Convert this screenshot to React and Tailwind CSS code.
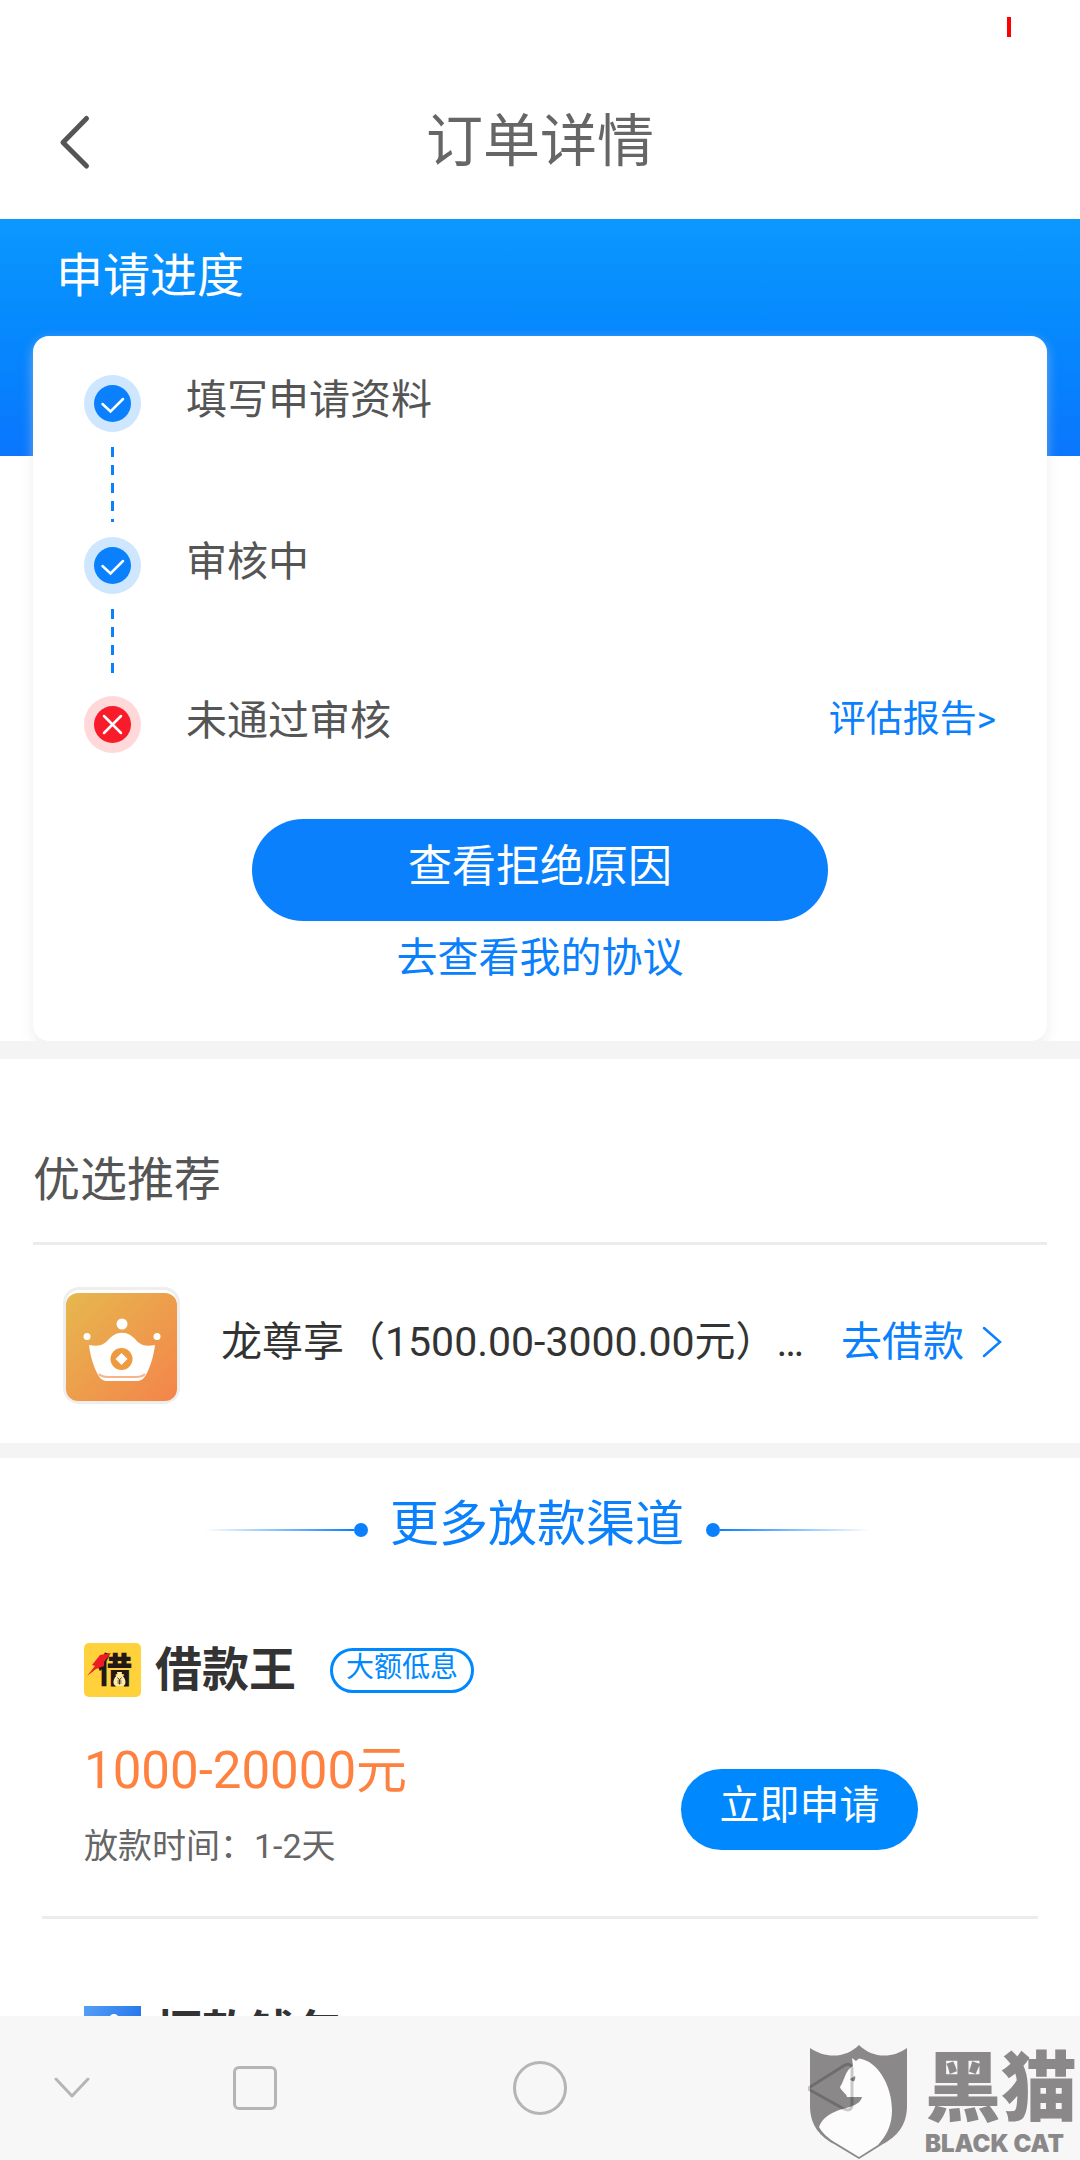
const steps = [
  { label: "填写申请资料", ok: true, line: "h-[75px]" },
  { label: "审核中", ok: true, line: "h-[72px]" },
  { label: "未通过审核", ok: false },
];

const loans = [
  {
    name: "借款王",
    tag: "大额低息",
    amount: "1000-20000元",
    time: "放款时间：1-2天",
    Logo: LogoJie,
  },
  {
    name: "恒款钱包",
    Logo: LogoWallet,
  },
];

function StepIcon({ ok }) {
  return (
    <svg viewBox="0 0 57 57" className="w-[57px] h-[57px]" fill="none">
      <circle cx="28.5" cy="28.5" r="28.5" fill={ok ? "#cfe6ff" : "#ffd9da"} />
      <circle cx="28.5" cy="28.5" r="18.5" fill={ok ? "#0b80fd" : "#f81c2b"} />
      <path
        d={ok ? "M18.5 29 L26.5 36.5 L39 24" : "M20 20 L37 37 M37 20 L20 37"}
        stroke="#fff"
        strokeWidth="2.5"
        strokeLinecap="round"
      />
    </svg>
  );
}

function DashedLine({ className }) {
  return (
    <svg className={"w-[3px] " + className}>
      <line x1="1.5" y1="0" x2="1.5" y2="100%" stroke="#0b80fd" strokeWidth="3" strokeDasharray="10 8" />
    </svg>
  );
}

function CrownIcon() {
  return (
    <svg viewBox="0 0 111 108" className="w-[111px] h-[108px] rounded-xl">
      <defs>
        <linearGradient id="crown" x1="0" y1="0" x2="1" y2="1">
          <stop offset="0" stopColor="#e6b84e" />
          <stop offset="1" stopColor="#f4844a" />
        </linearGradient>
      </defs>
      <rect width="111" height="108" fill="url(#crown)" />
      <g fill="#fff">
        <circle cx="56" cy="31" r="5.5" />
        <circle cx="21" cy="43.5" r="3.5" />
        <circle cx="91" cy="43.5" r="3.5" />
        <path d="M23 52 C34 54 38 52 44 45 C51 38 61 38 68 45 C74 52 78 54 89 52 C88 61 85 72 81 80 C78 86 75 88 71 88 L41 88 C37 88 34 86 31 80 C27 72 24 61 23 52 Z" />
      </g>
      <path d="M33 81 C36 84 39 84 42 84 L70 84 C73 84 76 84 79 81" fill="none" stroke="#f6b48a" strokeWidth="2" />
      <circle cx="55.5" cy="66" r="11" fill="#ee9a3f" />
      <path d="M55.5 60 L61.5 66 L55.5 72 L49.5 66 Z" fill="#fff" />
    </svg>
  );
}

function LogoJie() {
  return (
    <svg viewBox="0 0 57 54" className="w-[57px] h-[54px]">
      <rect width="57" height="54" rx="5" fill="#ffd23c" />
      <text
        x="13"
        y="40"
        className="text-[35px] font-black"
        fill="#231815"
        fontFamily="'Noto Sans CJK SC', sans-serif"
      >
        借
      </text>
      <path d="M16 12 L27 10 L20 19 L20 23 L12 26 L3 33 L11 23 L8 22 Z" fill="#ed1c24" />
      <path d="M33 29 L38 29 L37.5 32 C42 35 43 42 39 43 L32 43 C28 42 29 35 33.5 32 Z" fill="#ffe9a8" />
      <path d="M33.5 34.5 L35.5 37 L37.5 34.5 M35.5 37 V41.5 M33.5 38 H37.5 M33.5 40 H37.5" fill="none" stroke="#231815" strokeWidth="0.8" />
    </svg>
  );
}

function LogoWallet() {
  return (
    <svg viewBox="0 0 57 54" className="w-[57px] h-[54px]">
      <defs>
        <linearGradient id="wallet" x1="0" y1="0" x2="1" y2="0.4">
          <stop offset="0" stopColor="#549ff5" />
          <stop offset="1" stopColor="#2374ec" />
        </linearGradient>
      </defs>
      <rect width="57" height="54" fill="url(#wallet)" />
      <circle cx="30" cy="13" r="5" fill="#fff" />
      <rect x="14" y="20" width="30" height="22" rx="4" fill="#fff" />
    </svg>
  );
}

function LoanItem({ name, tag, amount, time, Logo }) {
  return (
    <li className="mx-[42px] px-[42px] pt-[87px] pb-[50px] border-b-3 border-[#ececec]">
      <div className="flex items-center h-[54px]">
        <Logo />
        <h3 className="ml-[14px] text-[47px] leading-[54px] font-bold text-[#333]">{name}</h3>
        {tag && (
          <span className="ml-[34px] flex items-center h-[45px] px-[13px] pb-1 border-3 border-[#0089ff] rounded-full text-[28px] leading-[32px] text-[#0089ff]">
            {tag}
          </span>
        )}
      </div>
      {amount && (
        <div className="mt-11 flex justify-between">
          <div>
            <p className="text-[51px] leading-[60px] text-[#ff8140]">{amount}</p>
            <p className="mt-[25px] text-[34px] leading-[40px] text-[#666]">{time}</p>
          </div>
          <button className="mt-7 mr-[78px] w-[237px] h-[81px] pb-2 rounded-full bg-[#0089ff] text-[40px] leading-[48px] text-white">
            立即申请
          </button>
        </div>
      )}
    </li>
  );
}

function BlackCat() {
  return (
    <div className="absolute right-0 bottom-0 flex items-end gap-[17px] text-[#8b8889] pointer-events-none">
      <svg viewBox="0 0 100 116" className="w-[100px] h-[116px]">
        <path
          d="M2 4 C18 15 38 14 51 1 C64 14 84 15 99 4 L99 62 C99 82 88 93 75 100 L51 115 L26 100 C13 93 2 82 2 62 Z"
          fill="#8b8889"
        />
        <path
          d="M44 14 L48 17 L51 14.5 C70 17 84 42 84 66 C84 82 78 92 70 101 L51 113 L28 99 C20 94 15 90 11 83 C16 70 30 66 42 63 C50 60 53 57 54 53 L39 53 C38 49 33 47 32 43 C36 38 37 26 45 22 Z"
          fill="#fcfcfc"
        />
        <path d="M42 35 L47 32 C48 36 46 38 44 37 Z" fill="#8b8889" />
        <path
          d="M2 43 L37 21 C41 19 44 21 44 25 V61 C44 66 40 67 36 65 L2 46 C0 45 0 44 2 43 Z"
          fill="none"
          stroke="#000"
          strokeOpacity="0.2"
          strokeWidth="3"
        />
      </svg>
      <div className="w-[155px]">
        <p className="text-[76px] leading-[78px] font-black whitespace-nowrap">黑猫</p>
        <p className="text-[24px] leading-[32px] font-black whitespace-nowrap font-[Inter,sans-serif]">
          BLACK CAT
        </p>
      </div>
    </div>
  );
}

export default function App() {
  return (
    <div className="flex flex-col h-screen overflow-hidden bg-white font-[Roboto,'Noto_Sans_CJK_SC',sans-serif]">
      <div className="flex justify-end items-start h-16 shrink-0 pt-[17px] pr-[69px]">
        <span className="w-1 h-5 bg-[#ff0000]" />
      </div>

      <header className="grid grid-cols-[1fr_auto_1fr] items-center h-[155px] shrink-0 px-[57px]">
        <button aria-label="返回" className="w-9 h-14">
          <svg viewBox="0 0 36 56" fill="none" className="w-9 h-14">
            <path d="M29.5 4.5 L6 28.5 L29.5 52" stroke="#555" strokeWidth="5" strokeLinecap="round" strokeLinejoin="round" />
          </svg>
        </button>
        <h1 className="text-[57px] leading-[66px] text-[#666]">订单详情</h1>
      </header>

      <main className="flex-1 min-h-0 overflow-hidden">
        <section>
          <div className="h-[237px] pt-8 px-[56px] bg-linear-to-b from-[#0b98fe] to-[#0a76fd]">
            <h2 className="text-[47px] leading-[50px] text-white">申请进度</h2>
          </div>

          <div className="relative -mt-[120px] mx-[33px] pt-[39px] pb-[54px] px-[51px] flex flex-col bg-white rounded-2xl shadow-[0_4px_12px_#dcdcdc80]">
            <ol>
              {steps.map((step) => (
                <li key={step.label} className="flex gap-[45px]">
                  <div className="flex flex-col items-center gap-[15px]">
                    <StepIcon ok={step.ok} />
                    {step.line && (
                      <div className="pb-[15px]">
                        <DashedLine className={step.line} />
                      </div>
                    )}
                  </div>
                  <p className="flex-1 text-[41px] leading-[50px] text-[#555]">{step.label}</p>
                  {!step.ok && (
                    <a href="#report" className="text-[37px] leading-[48px] text-[#0b80fd]">
                      评估报告&gt;
                    </a>
                  )}
                </li>
              ))}
            </ol>

            <button className="self-center mt-[66px] w-[576px] h-[102px] pb-[6px] rounded-full bg-[#0b80fd] text-[44px] text-white">
              查看拒绝原因
            </button>
            <a href="#agreement" className="self-center mt-2 text-[41px] leading-[58px] text-[#0b80fd]">
              去查看我的协议
            </a>
          </div>
        </section>

        <section className="relative border-t-18 border-[#f4f4f4] bg-white">
          <div className="mx-[33px]">
            <h2 className="pt-[93px] pb-[34px] text-[47px] leading-[56px] text-[#555] border-b-3 border-[#ececec]">
              优选推荐
            </h2>
            <div className="flex items-center pt-[42px] pb-[39px] pl-[30px] pr-[45px]">
              <div className="p-[3px] pt-[6px] rounded-2xl bg-[#fefefe] ring-3 ring-[#eee] ring-inset">
                <CrownIcon />
              </div>
              <p className="flex-1 min-w-0 ml-[41px] pb-2 text-[41px] leading-[48px] text-[#333] whitespace-nowrap">
                龙尊享（1500.00-3000.00元）…
              </p>
              <a href="#borrow" className="flex items-center gap-[18px] pb-2 text-[41px] leading-[48px] text-[#0b80fd]">
                去借款
                <svg viewBox="0 0 20 32" fill="none" className="w-5 h-8">
                  <path d="M2 2 L18 16 L2 30" stroke="#0b80fd" strokeWidth="2.5" strokeLinecap="round" />
                </svg>
              </a>
            </div>
          </div>
        </section>

        <section className="border-t-15 border-[#f4f4f4]">
          <div className="flex items-center justify-center gap-[22px] pt-9 pr-[6px]">
            <div className="flex items-center pt-[9px]">
              <span className="w-[150px] h-[2px] bg-linear-to-l from-[#0b80fd] to-transparent" />
              <span className="size-[14px] rounded-full bg-[#0b80fd]" />
            </div>
            <h2 className="text-[49px] leading-[62px] text-[#0b80fd]">更多放款渠道</h2>
            <div className="flex items-center pt-[9px]">
              <span className="size-[14px] rounded-full bg-[#0b80fd]" />
              <span className="w-[150px] h-[2px] bg-linear-to-r from-[#0b80fd] to-transparent" />
            </div>
          </div>
          <ul>
            {loans.map((loan) => (
              <LoanItem key={loan.name} {...loan} />
            ))}
          </ul>
        </section>
      </main>

      <nav className="relative flex items-center h-36 shrink-0 bg-[#f7f7f7]">
        <button aria-label="收起" className="w-[144px] flex justify-center">
          <svg viewBox="0 0 36 22" fill="none" className="w-9 h-[22px]">
            <path d="M2 2 L18 19 L34 2" stroke="#b5b5b5" strokeWidth="3" strokeLinecap="round" strokeLinejoin="round" />
          </svg>
        </button>
        <div className="flex-1 grid grid-cols-3 items-center pr-[102px]">
          <button aria-label="最近任务" className="ml-[89px]">
            <span className="block size-11 border-3 border-[#b5b5b5] rounded-md" />
          </button>
          <button aria-label="主页" className="ml-[91px]">
            <span className="block size-[54px] border-3 border-[#b5b5b5] rounded-full" />
          </button>
        </div>
        <BlackCat />
      </nav>
    </div>
  );
}
